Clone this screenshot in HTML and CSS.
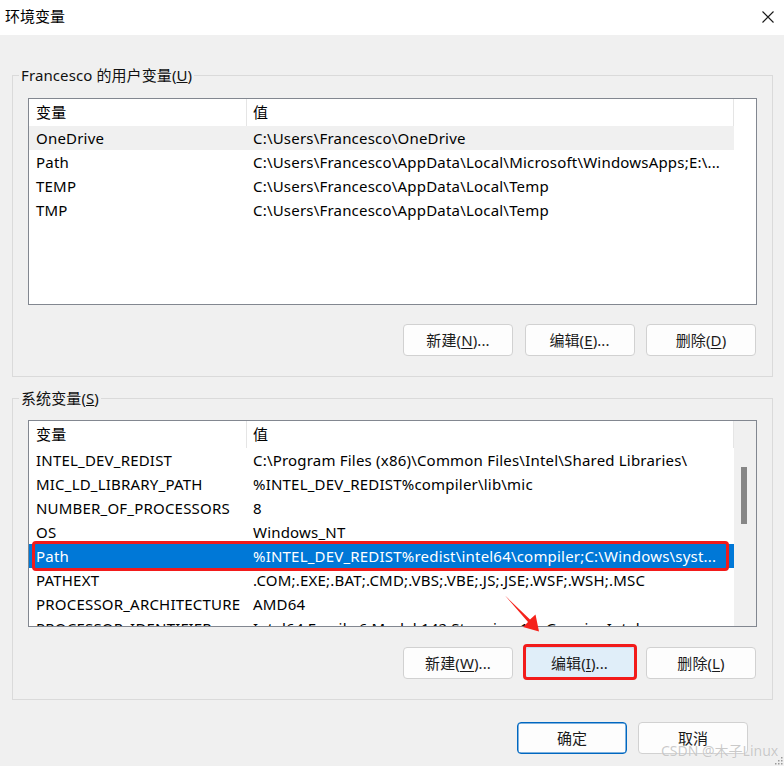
FILE: index.html
```html
<!DOCTYPE html>
<html lang="zh-CN">
<head>
<meta charset="utf-8">
<title>环境变量</title>
<link rel="stylesheet" href="styles.css">
</head>
<body>
<div class="window">
  <div class="titlebar">
    <span class="title">环境变量</span>
    <svg class="close" width="14" height="14" viewBox="0 0 14 14"><path d="M1.5 1.5 L12.5 12.5 M12.5 1.5 L1.5 12.5" stroke="#1a1a1a" stroke-width="1.1" fill="none"/></svg>
  </div>
  <div class="content">
    <fieldset class="group">
      <legend>Francesco 的用户变量(<u>U</u>)</legend>
      <div class="list">
        <div class="rows">
          <div class="row header"><div class="c1">变量</div><div class="c2">值</div></div>
          <div class="row hover"><div class="c1">OneDrive</div><div class="c2">C:\Users\Francesco\OneDrive</div></div>
          <div class="row"><div class="c1">Path</div><div class="c2">C:\Users\Francesco\AppData\Local\Microsoft\WindowsApps;E:\...</div></div>
          <div class="row"><div class="c1">TEMP</div><div class="c2">C:\Users\Francesco\AppData\Local\Temp</div></div>
          <div class="row"><div class="c1">TMP</div><div class="c2">C:\Users\Francesco\AppData\Local\Temp</div></div>
        </div>
      </div>
      <div class="buttons">
        <button class="btn">新建(<u>N</u>)...</button>
        <button class="btn">编辑(<u>E</u>)...</button>
        <button class="btn">删除(<u>D</u>)</button>
      </div>
    </fieldset>

    <fieldset class="group group-sys">
      <legend>系统变量(<u>S</u>)</legend>
      <div class="list">
        <div class="rows">
          <div class="row header"><div class="c1">变量</div><div class="c2">值</div></div>
          <div class="row"><div class="c1">INTEL_DEV_REDIST</div><div class="c2">C:\Program Files (x86)\Common Files\Intel\Shared Libraries\</div></div>
          <div class="row"><div class="c1">MIC_LD_LIBRARY_PATH</div><div class="c2">%INTEL_DEV_REDIST%compiler\lib\mic</div></div>
          <div class="row"><div class="c1">NUMBER_OF_PROCESSORS</div><div class="c2">8</div></div>
          <div class="row"><div class="c1">OS</div><div class="c2">Windows_NT</div></div>
          <div class="row selected"><div class="c1">Path</div><div class="c2">%INTEL_DEV_REDIST%redist\intel64\compiler;C:\Windows\syst...</div></div>
          <div class="row"><div class="c1">PATHEXT</div><div class="c2">.COM;.EXE;.BAT;.CMD;.VBS;.VBE;.JS;.JSE;.WSF;.WSH;.MSC</div></div>
          <div class="row"><div class="c1">PROCESSOR_ARCHITECTURE</div><div class="c2">AMD64</div></div>
          <div class="row"><div class="c1">PROCESSOR_IDENTIFIER</div><div class="c2">Intel64 Family 6 Model 142 Stepping 10, GenuineIntel</div></div>
        </div>
        <div class="scrollbar"><div class="thumb"></div></div>
      </div>
      <div class="buttons">
        <button class="btn">新建(<u>W</u>)...</button>
        <button class="btn btn-hot">编辑(<u>I</u>)...</button>
        <button class="btn">删除(<u>L</u>)</button>
      </div>
    </fieldset>

    <div class="footer">
      <button class="btn btn-default">确定</button>
      <button class="btn">取消</button>
    </div>
  </div>

  <div class="mark mark-row"></div>
  <div class="mark mark-btn"></div>
  <svg class="arrow" width="784" height="766" viewBox="0 0 784 766"><polygon points="505,595.5 530,619.5 535.5,614.5 539,631.5 523,627 528,622" fill="#f5221b"/></svg>
  <div class="watermark">CSDN @木子Linux</div>
  <svg class="grip" width="8" height="8" viewBox="0 0 8 8"><g fill="#9a9a9a"><rect x="6" y="0" width="1.5" height="1.5"/><rect x="3" y="3" width="1.5" height="1.5"/><rect x="6" y="3" width="1.5" height="1.5"/><rect x="0" y="6" width="1.5" height="1.5"/><rect x="3" y="6" width="1.5" height="1.5"/><rect x="6" y="6" width="1.5" height="1.5"/></g></svg>
</div>
</body>
</html>
```
FILE: styles.css
```css
* { box-sizing: border-box; }
html, body { margin: 0; padding: 0; }
body {
  width: 784px;
  height: 766px;
  overflow: hidden;
  background: #f0f0f0;
  font-family: "Noto Sans", "Noto Sans CJK SC", sans-serif;
  font-size: 15px;
  color: #111;
}
.window {
  position: relative;
  width: 784px;
  height: 766px;
  display: flex;
  flex-direction: column;
}
.titlebar {
  height: 35px;
  background: #fff;
  display: flex;
  align-items: center;
  justify-content: space-between;
  padding: 0 9px 3px 5px;
  flex: none;
}
.title { font-size: 15px; line-height: 20px; color: #000; }
.close { display: block; margin-top: 1px; }
.content {
  flex: 1;
  padding: 30px 11px 0 12px;
  display: flex;
  flex-direction: column;
}
.group {
  margin: 0;
  padding: 13px 15px 20px 15px;
  border: 1px solid #dadada;
  min-inline-size: 0;
}
.group-sys { margin-top: 11px; padding-top: 12px; }
legend {
  padding: 0 2px;
  margin-left: -9px;
  line-height: 20px;
  color: #111;
  letter-spacing: 0.1px;
}
.list {
  height: 207px;
  border: 1px solid #828790;
  background: #fff;
  display: flex;
  overflow: hidden;
}
.rows { width: 705px; flex: none; }
.row {
  display: flex;
  height: 24px;
  line-height: 24px;
  white-space: nowrap;
  color: #000;
  letter-spacing: 0.2px;
}
.row .c1 { width: 218px; flex: none; padding-left: 7px; overflow: hidden; }
.row .c2 { flex: 1; min-width: 0; padding: 0 4px 0 6px; overflow: hidden; text-overflow: ellipsis; }
.row.header { height: 27px; line-height: 26px; }
.row.header .c1 { border-right: 1px solid #e5e5e5; }
.row.header .c2 { border-right: 1px solid #e5e5e5; }
.row.hover { background: #f0f0f0; }
.row.selected { background: #0078d7; color: #fff; }
.scrollbar {
  flex: 1;
  background: #f0f0f0;
  padding: 46px 0 0 7px;
}
.thumb { width: 6px; height: 57px; background: #868686; }
.buttons {
  display: flex;
  justify-content: flex-end;
  gap: 11.5px;
  margin-top: 19px;
  padding-right: 1px;
}
.group-sys .buttons { margin-top: 20px; }
.btn {
  width: 110px;
  height: 32px;
  border: 1px solid #d1d1d1;
  border-radius: 4px;
  background: #fdfdfd;
  font-family: inherit;
  font-size: 15px;
  color: #1b1b1b;
  padding: 0;
  line-height: 20px;
  letter-spacing: 0.1px;
}
.btn u { text-underline-offset: 2px; }
.btn-hot { background: #e0eef9; border-color: #c5d9ee; }
.footer {
  display: flex;
  justify-content: flex-end;
  gap: 11px;
  margin-top: 22px;
  padding-right: 25px;
}
.btn-default { border: 1px solid #0067c0; box-shadow: inset 0 0 0 0.5px #0067c0; }
.mark {
  position: absolute;
  border: 3px solid #f21b1b;
  border-radius: 4px;
}
.mark-row { left: 32px; top: 541px; width: 697px; height: 30px; }
.mark-btn { left: 523px; top: 644px; width: 114px; height: 36px; }
.arrow { position: absolute; left: 0; top: 0; pointer-events: none; }
.watermark {
  position: absolute;
  left: 661px;
  top: 741px;
  font-size: 14px;
  line-height: 20px;
  color: rgba(150, 150, 150, 0.5);
  text-shadow: 0 0 1px rgba(255,255,255,0.9);
  white-space: nowrap;
}
.grip { position: absolute; right: 1px; bottom: 1px; }
```
